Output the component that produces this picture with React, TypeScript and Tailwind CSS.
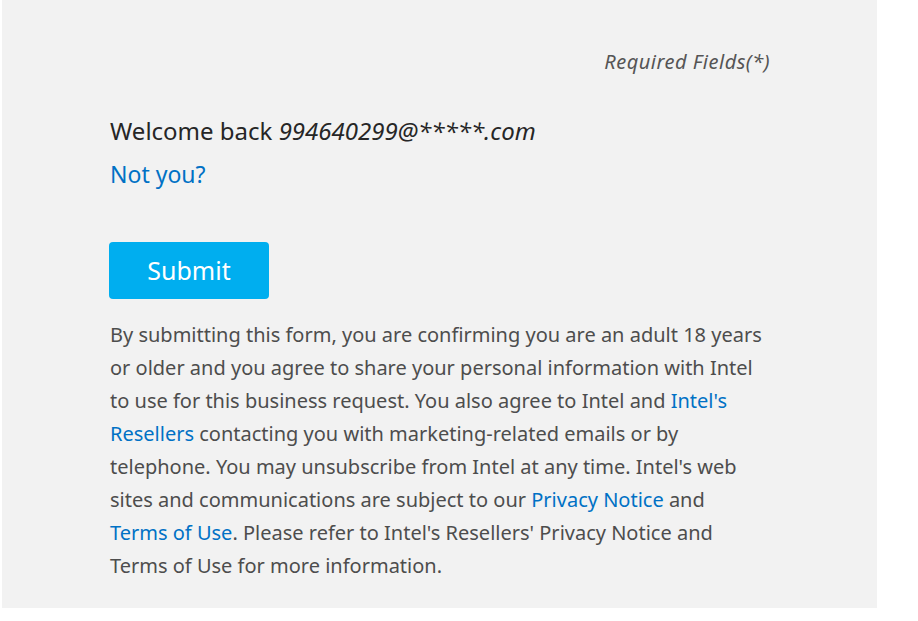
import React from "react";

export default function App() {
  return (
    <div className="w-[918px] h-[621px] bg-white" style={{ fontFamily: '"Noto Sans", "Open Sans", sans-serif' }}>
      <div className="ml-[2px] w-[875px] h-[608px] bg-[#f2f2f2] pl-[108px] pr-[107px]">
        <div className="pt-[49px] text-right text-[20px] leading-[26px] tracking-[0.5px] italic text-[#555555]">
          Required Fields(*)
        </div>
        <div className="mt-[41px] text-[24px] leading-[30px] text-[#262626]">
          Welcome back <span className="italic">994640299@*****.com</span>
        </div>
        <div className="mt-[13px] text-[23px] leading-[30px] text-[#0071c5]">Not you?</div>
        <button className="mt-[53px] -ml-px w-[160px] h-[57px] rounded-[4px] bg-[#00aeef] text-white text-[25px]">
          Submit
        </button>
        <p className="mt-[19px] text-[20px] leading-[33px] text-[#4d4d4d]">
          By submitting this form, you are confirming you are an adult 18 years
          <br />
          or older and you agree to share your personal information with Intel
          <br />
          to use for this business request. You also agree to Intel and{" "}
          <span className="text-[#0071c5]">Intel's</span>
          <br />
          <span className="text-[#0071c5]">Resellers</span> contacting you with marketing-related emails or by
          <br />
          telephone. You may unsubscribe from Intel at any time. Intel's web
          <br />
          sites and communications are subject to our{" "}
          <span className="text-[#0071c5]">Privacy Notice</span> and
          <br />
          <span className="text-[#0071c5]">Terms of Use</span>. Please refer to Intel's Resellers' Privacy Notice and
          <br />
          Terms of Use for more information.
        </p>
      </div>
    </div>
  );
}
